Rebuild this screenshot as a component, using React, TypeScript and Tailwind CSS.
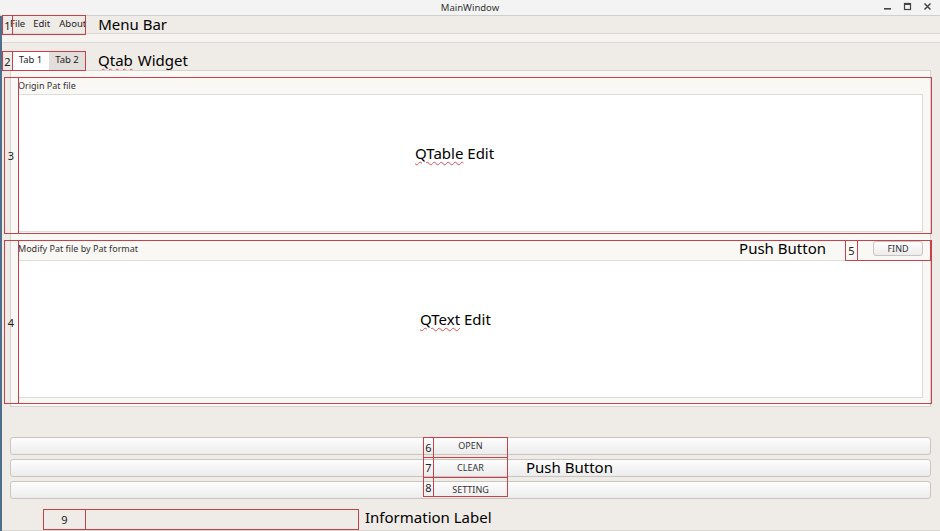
import React from "react";

const red = "border-[#c8414a]";

function Box({ l, t, w, h, d, n, nx }: { l: number; t: number; w: number; h: number; d: number; n?: string; nx?: number }) {
  return (
    <>
      <div className={`absolute border ${red} pointer-events-none`} style={{ left: l, top: t, width: w, height: h }} />
      <div className="absolute w-px bg-[#c8414a]" style={{ left: d, top: t, height: h }} />
      {n && (
        <div
          className="absolute flex items-center justify-center text-[11px] text-[#222] leading-none"
          style={{ left: l + 1, top: t, width: (nx ?? d) - l - 1, height: h }}
        >
          {n}
        </div>
      )}
    </>
  );
}

function QtButton({ children }: { children: React.ReactNode }) {
  return (
    <div className="h-[18px] w-full flex items-center justify-center rounded-[3px] border border-[#c9c5c1] bg-gradient-to-b from-[#fdfdfd] to-[#ececec] text-[9px] text-[#333]">
      {children}
    </div>
  );
}

export default function App() {
  return (
    <div
      className="relative w-[940px] h-[531px] overflow-hidden bg-[#efebe7] flex flex-col"
      style={{ fontFamily: '"Noto Sans", "Noto Sans CJK KR", sans-serif' }}
    >
      {/* Title bar */}
      <div className="h-[16px] shrink-0 bg-[#f3f3f3] border-b border-[#cfcfcf] relative flex items-center justify-center">
        <span className="text-[9.5px] text-[#333] leading-none">MainWindow</span>
        <div className="absolute right-[8px] top-[2px] flex items-center gap-[11px]">
          <svg width="9" height="9" viewBox="0 0 9 9"><rect x="1" y="6" width="7" height="1.6" fill="#444" /></svg>
          <svg width="9" height="9" viewBox="0 0 9 9"><rect x="1.5" y="1.5" width="6" height="6" fill="none" stroke="#444" strokeWidth="1.2" /><rect x="1.5" y="1.2" width="6" height="1.8" fill="#444" /></svg>
          <svg width="9" height="9" viewBox="0 0 9 9"><path d="M1.5 1.5 L7.5 7.5 M7.5 1.5 L1.5 7.5" stroke="#444" strokeWidth="1.5" /></svg>
        </div>
      </div>

      <div className="flex-1 flex flex-col border-l-2 border-[#4f6e8c]">
        {/* Menu bar */}
        <div className="h-[17px] shrink-0 flex items-center text-[9.5px] text-[#222]">
          <span className="ml-[8px]">File</span>
          <span className="ml-[8px]">Edit</span>
          <span className="ml-[9px]">About</span>
          <span className="ml-[12px] text-[15px] text-black leading-none">Menu Bar</span>
        </div>
        {/* tool band */}
        <div className="h-[10px] shrink-0 bg-[#f6f3f0] border-y border-[#dcd8d3]" />

        {/* Tab bar */}
        <div className="h-[27px] shrink-0 flex items-end">
          <div className="ml-[10px] flex h-[19px] text-[9.5px] text-[#222]">
            <div className="w-[37px] bg-white flex items-center justify-center">Tab 1</div>
            <div className="w-[36px] bg-[#e2dedb] flex items-center justify-center">Tab 2</div>
          </div>
          <div className="ml-[13px] h-[19px] flex items-center text-[15px] text-black leading-none">
            <span className="underline decoration-wavy decoration-[#e05050] decoration-1 underline-offset-2">Qtab</span>
            <span className="ml-[5px]">Widget</span>
          </div>
        </div>

        {/* Tab panel */}
        <div className="ml-[8px] w-[921px] h-[337px] shrink-0 border border-[#d6d2cd] bg-[#faf8f5] px-[7px] pt-[6px] flex flex-col">
          <div className="h-[17px] flex items-center text-[9px] text-[#333]">Origin Pat file</div>
          <div className="h-[138px] bg-white border border-[#dcdcdc] pl-[396px] pt-[48px]">
            <div className="text-[15px] leading-[20px] text-black">
              <span className="underline decoration-wavy decoration-[#e05050] decoration-1 underline-offset-2">QTable</span> Edit
            </div>
          </div>
          <div className="mt-[8px] h-[20px] flex items-center text-[9px] text-[#333]">
            <span className="-mt-[2px]">Modify Pat file by Pat format</span>
            <span className="ml-auto -mt-[3px] text-[15px] text-black leading-none">Push Button</span>
            <div className="ml-[47px] -mt-[3px] w-[50px] h-[15px] flex items-center justify-center rounded-[3px] border border-[#c9c5c1] bg-gradient-to-b from-[#fdfdfd] to-[#ececec] text-[9px] text-[#333]">
              FIND
            </div>
          </div>
          <div className="h-[138px] bg-white border border-[#dcdcdc] pl-[401px] pt-[48px]">
            <div className="text-[15px] leading-[20px] text-black">
              <span className="underline decoration-wavy decoration-[#e05050] decoration-1 underline-offset-2">QText</span> Edit
            </div>
          </div>
        </div>

        {/* Buttons */}
        <div className="ml-[8px] w-[921px] mt-[30px] flex flex-col gap-[4px]">
          <QtButton>OPEN</QtButton>
          <QtButton>CLEAR</QtButton>
          <QtButton>SETTING</QtButton>
        </div>

        {/* Info label row */}
        <div className="mt-[9px] h-[20px] flex items-center">
          <div className="ml-[41px] w-[315px]" />
          <span className="ml-[7px] -mt-[2px] text-[15px] text-black leading-none">Information Label</span>
        </div>
        <div className="flex-1 border-b border-[#d8d4cf]" />
      </div>

      {/* Annotation overlays */}
      <Box l={2} t={15} w={84} h={20} d={12} n="1" />
      <Box l={2} t={51} w={84} h={20} d={12} n="2" />
      <Box l={4} t={77} w={928} h={157} d={18} />
      <div className="absolute left-[6px] top-[148px] w-[10px] text-center text-[11px] text-[#222]">3</div>
      <Box l={4} t={240} w={928} h={164} d={18} />
      <div className="absolute left-[6px] top-[315px] w-[10px] text-center text-[11px] text-[#222]">4</div>
      <Box l={845} t={240} w={86} h={21} d={857} n="5" />
      <Box l={423} t={437} w={85} h={21} d={433} n="6" />
      <Box l={423} t={457} w={85} h={21} d={433} n="7" />
      <Box l={423} t={477} w={85} h={20} d={433} n="8" />
      <div className="absolute left-[526px] top-[458px] text-[15px] leading-[18px] text-black">Push Button</div>
      <Box l={43} t={509} w={316} h={21} d={85} n="9" />
    </div>
  );
}
